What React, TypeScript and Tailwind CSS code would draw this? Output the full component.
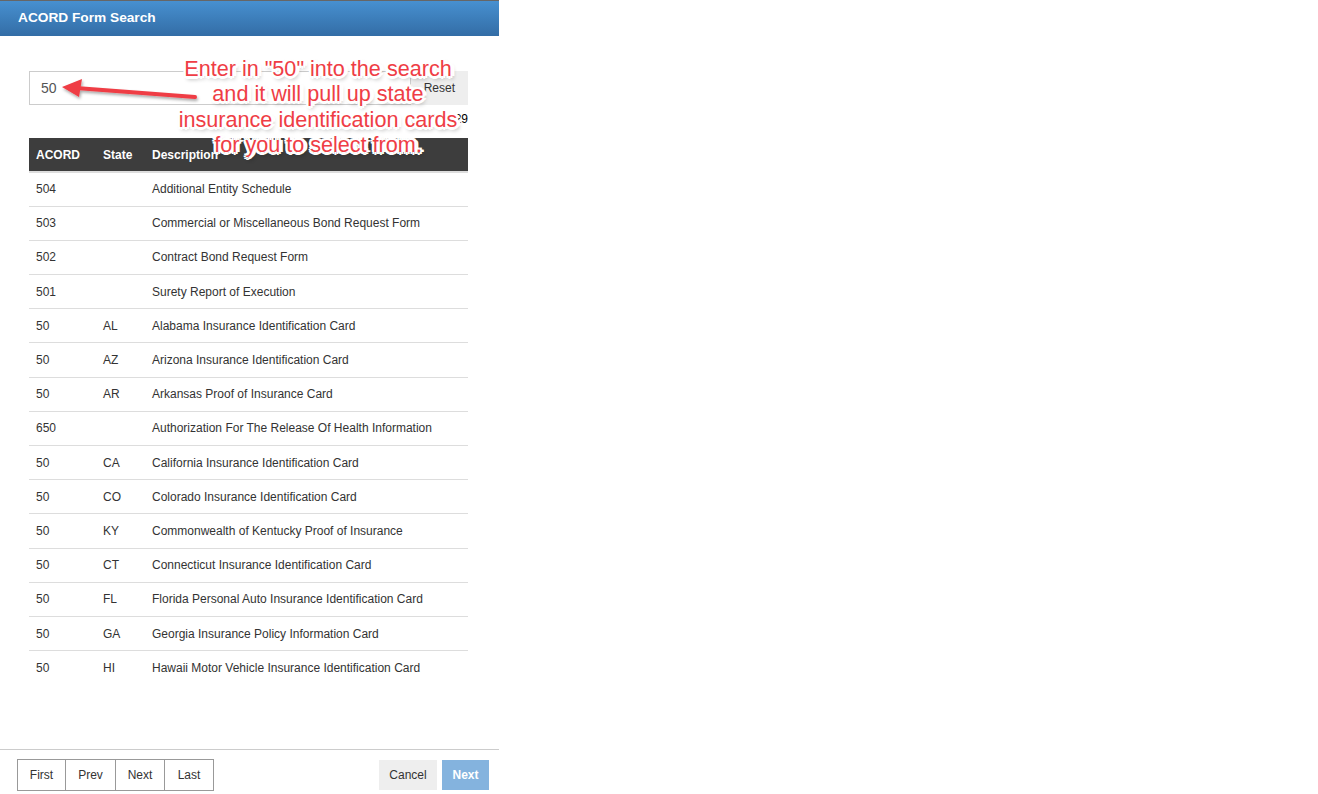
import React from "react";

const rows: [string, string, string][] = [
  ["504", "", "Additional Entity Schedule"],
  ["503", "", "Commercial or Miscellaneous Bond Request Form"],
  ["502", "", "Contract Bond Request Form"],
  ["501", "", "Surety Report of Execution"],
  ["50", "AL", "Alabama Insurance Identification Card"],
  ["50", "AZ", "Arizona Insurance Identification Card"],
  ["50", "AR", "Arkansas Proof of Insurance Card"],
  ["650", "", "Authorization For The Release Of Health Information"],
  ["50", "CA", "California Insurance Identification Card"],
  ["50", "CO", "Colorado Insurance Identification Card"],
  ["50", "KY", "Commonwealth of Kentucky Proof of Insurance"],
  ["50", "CT", "Connecticut Insurance Identification Card"],
  ["50", "FL", "Florida Personal Auto Insurance Identification Card"],
  ["50", "GA", "Georgia Insurance Policy Information Card"],
  ["50", "HI", "Hawaii Motor Vehicle Insurance Identification Card"],
];

function Annotation() {
  return (
    <div className="pointer-events-none absolute left-0 top-0">
      <svg
        className="absolute left-[40px] top-[70px]"
        width="170"
        height="40"
        viewBox="0 0 170 40"
      >
        <defs>
          <filter id="sh" x="-20%" y="-50%" width="140%" height="200%">
            <feDropShadow dx="1" dy="2" stdDeviation="1.5" floodColor="#000" floodOpacity="0.35" />
          </filter>
        </defs>
        <g filter="url(#sh)">
          <line x1="155" y1="27" x2="36" y2="18" stroke="#ef3d45" strokeWidth="4" strokeLinecap="round" />
          <polygon points="22,17 42,9 39,27" fill="#ef3d45" />
        </g>
      </svg>
      <div className="absolute left-[163px] top-[56px] w-[310px] text-center font-['Liberation_Sans',Arial,sans-serif] text-[21.6px] leading-[25.3px] text-[#ef3d45] [text-shadow:-2px_-2px_0_#fff,2px_-2px_0_#fff,-2px_2px_0_#fff,2px_2px_0_#fff,0_2.5px_0_#fff,2.5px_0_0_#fff,-2.5px_0_0_#fff,0_-2.5px_0_#fff,4px_0_0_#fff,2px_3px_4px_rgba(0,0,0,0.45)]">
        Enter in "50" into the search
        <br />
        and it will pull up state
        <br />
        insurance identification cards
        <br />
        for you to select from.
      </div>
    </div>
  );
}

export default function App() {
  return (
    <div className="relative flex h-[794px] w-[499px] flex-col bg-white font-['Liberation_Sans',Arial,sans-serif] text-[12px] text-[#333]">
      <div className="flex h-[36px] items-center border-t border-[#666] bg-gradient-to-b from-[#4790d0] to-[#336da6] px-[18px]">
        <h1 className="text-[13.7px] font-bold text-white">ACORD Form Search</h1>
      </div>

      <div className="flex-1 px-[29px] pt-[35px]">
        <div className="flex h-[34px] w-[439px]">
          <input
            className="h-full flex-1 border border-[#ccc] px-[11px] text-[14px] text-[#555] outline-none"
            defaultValue="50"
            readOnly
          />
          <button className="h-full bg-[#eee] px-[13px] text-[12px] text-[#333]">Reset</button>
        </div>
        <div className="mt-[5px] h-[28px] w-[439px] text-right text-[12px] text-black">1 - 15 of 29</div>

        <table className="w-[439px] border-collapse text-left">
          <thead>
            <tr className="h-[34px] border-b-[2px] border-[#ddd] bg-[#3d3d3d] text-white">
              <th className="w-[74px] pl-[7px] font-bold">ACORD</th>
              <th className="w-[49px] font-bold">State</th>
              <th className="font-bold">Description</th>
            </tr>
          </thead>
          <tbody>
            {rows.map(([code, state, desc], i) => (
              <tr
                key={i}
                className={`h-[34.2px] ${i < rows.length - 1 ? "border-b border-[#ddd]" : ""}`}
              >
                <td className="pl-[7px]">{code}</td>
                <td>{state}</td>
                <td>{desc}</td>
              </tr>
            ))}
          </tbody>
        </table>
      </div>

      <div className="flex h-[45px] items-start justify-between border-t border-[#ccc] pl-[17px] pr-[10px] pt-[9px]">
        <div className="flex h-[32px] border border-[#999] text-[12px] text-[#333]">
          <button className="w-[48px] border-r border-[#999]">First</button>
          <button className="w-[50px] border-r border-[#999]">Prev</button>
          <button className="w-[49px] border-r border-[#999]">Next</button>
          <button className="w-[48px]">Last</button>
        </div>
        <div className="flex gap-[5px] pt-[1px]">
          <button className="h-[30px] w-[58px] bg-[#eee] text-[12px] text-[#333]">Cancel</button>
          <button className="h-[30px] w-[47px] bg-[#84b3de] text-[12px] font-bold text-white">Next</button>
        </div>
      </div>

      <Annotation />
    </div>
  );
}
